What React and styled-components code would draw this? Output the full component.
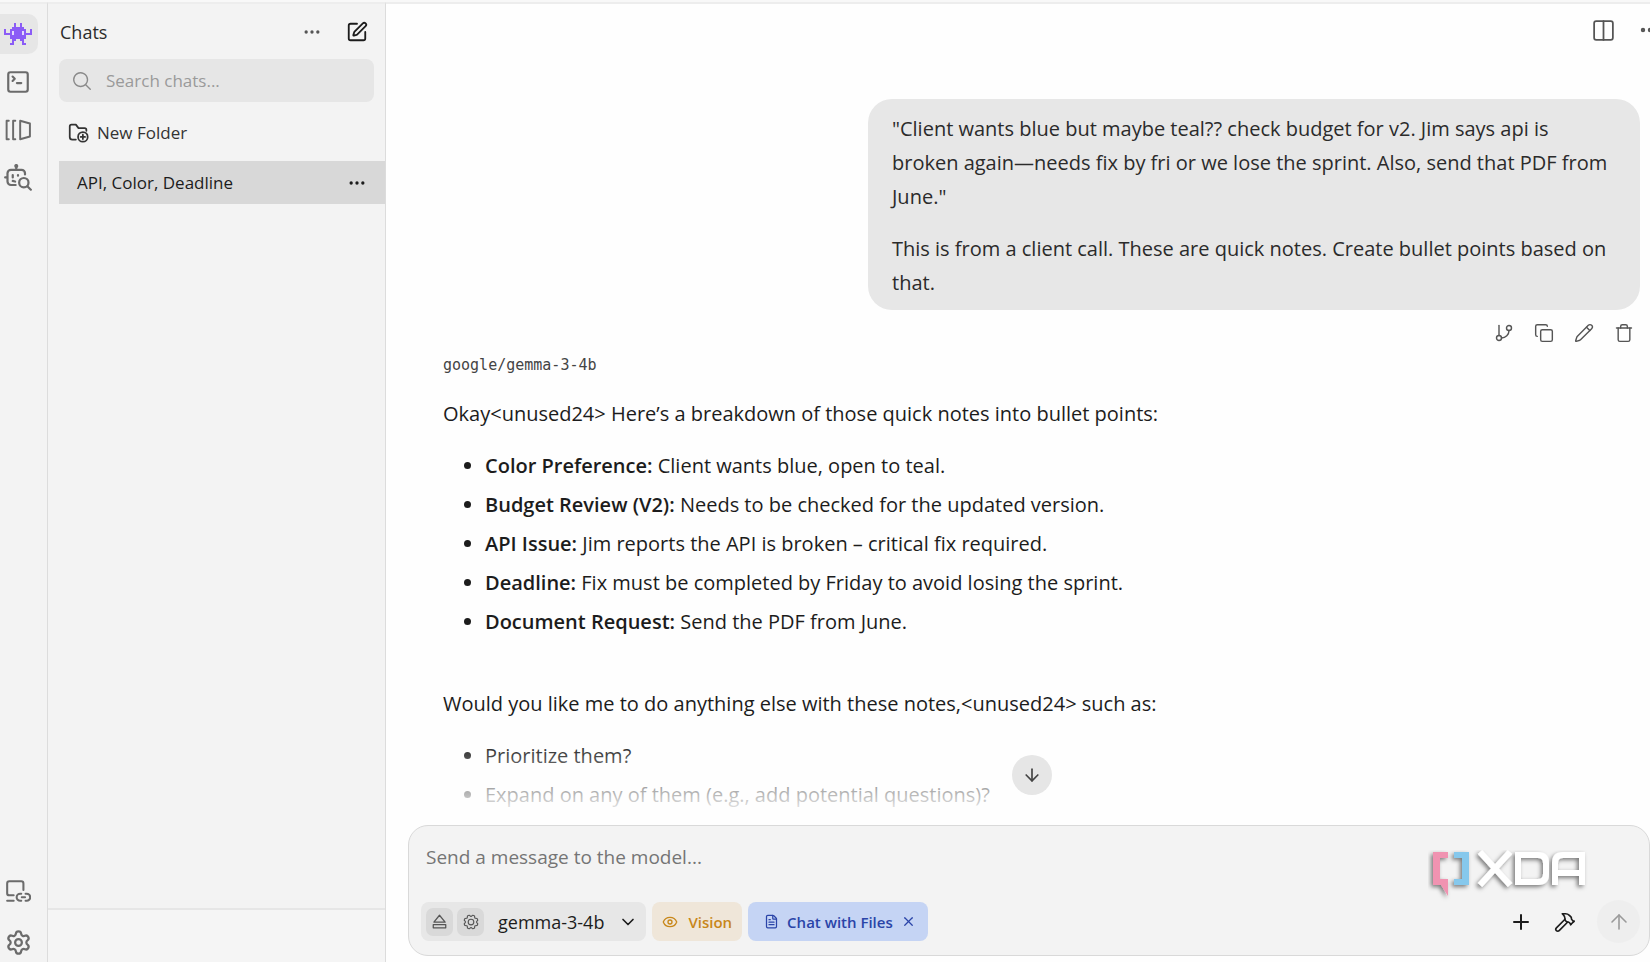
import React from 'react';
import styled, { createGlobalStyle, css } from 'styled-components';
import {
  ArrowDown,
  ArrowUp,
  ChevronDown,
  Columns2,
  Copy,
  Ellipsis,
  Eye,
  FileText,
  GitBranch,
  Hammer,
  Pencil,
  Plus,
  Settings,
  SquarePen,
  SquareTerminal,
  Trash,
  X,
} from 'lucide-react';
import { PiGear, PiMagnifyingGlass } from 'react-icons/pi';

const GlobalStyle = createGlobalStyle`
  * {
    box-sizing: border-box;
  }

  body {
    margin: 0;
    background: #fefefe;
    color: #1c1c1c;
    font-family: 'Open Sans', 'Noto Sans', sans-serif;
  }

  button, input, textarea {
    font: inherit;
    color: inherit;
  }
`;

const Window = styled.div`
  height: 100vh;
  display: flex;
  border-top: 2px solid #f8f8f8;
  overflow: hidden;
`;

const PlainButton = styled.button`
  display: flex;
  align-items: center;
  justify-content: center;
  padding: 0;
  border: none;
  background: none;
  cursor: pointer;
`;

/* icon rail */

const Rail = styled.nav`
  width: 48px;
  flex-shrink: 0;
  display: flex;
  flex-direction: column;
  justify-content: space-between;
  padding: 10px 0 0;
  background: #f3f3f3;
  border-top: 2px solid #ededed;
  border-right: 1px solid #dcdcdc;
`;

const RailGroup = styled.div`
  display: flex;
  flex-direction: column;
  gap: ${({ $gap }) => $gap}px;
`;

const RailButton = styled(PlainButton)`
  width: 38px;
  height: 40px;
  padding-right: 2px;
  color: #6b6b6b;
  border-radius: 0 10px 10px 0;
  ${({ $active }) => $active && css`
    background: #e6e6e6;
    color: #8b5cf6;
  `}
`;

/* chat list */

const Sidebar = styled.aside`
  width: 338px;
  flex-shrink: 0;
  display: flex;
  flex-direction: column;
  background: #f3f3f3;
  border-top: 2px solid #ededed;
  border-right: 1px solid #dcdcdc;
  padding-left: 11px;
`;

const SidebarHeader = styled.div`
  height: 55px;
  display: flex;
  align-items: center;
  gap: 24px;
  padding: 0 17px 0 1px;
`;

const SidebarTitle = styled.h1`
  flex: 1;
  margin: 0;
  font-size: 18px;
  line-height: 24px;
  font-weight: 500;
  color: #2b2b2b;
`;

const SearchBox = styled.label`
  height: 43px;
  flex-shrink: 0;
  margin-right: 11px;
  display: flex;
  align-items: center;
  gap: 11px;
  padding: 0 12px;
  border-radius: 8px;
  background: #e6e6e6;
  color: #8a8a8a;
`;

const SearchInput = styled.input`
  flex: 1;
  min-width: 0;
  border: none;
  outline: none;
  background: none;
  font-size: 17px;
  &::placeholder {
    color: #9a9a9a;
  }
`;

const NewFolder = styled(PlainButton)`
  height: 59px;
  justify-content: flex-start;
  gap: 8px;
  padding: 2px 0 0 9px;
  font-size: 17px;
  color: #333;
`;

const ChatRow = styled.div`
  height: 43px;
  display: flex;
  align-items: center;
  justify-content: space-between;
  padding: 0 18px;
  background: #d8d8d8;
  font-size: 17px;
`;

const ChatLink = styled.a`
  color: #1c1c1c;
  text-decoration: none;
`;

const SidebarFooter = styled.div`
  height: 54px;
  margin: auto 0 0 -11px;
  border-top: 2px solid #e6e6e6;
  background: #f5f5f5;
`;

/* conversation */

const Main = styled.main`
  flex: 1;
  min-width: 0;
  display: flex;
  flex-direction: column;
  border-top: 2px solid #ededed;
`;

const Toolbar = styled.header`
  height: 52px;
  flex-shrink: 0;
  display: flex;
  align-items: center;
  justify-content: flex-end;
  gap: 22px;
  margin-right: -12px;
`;

const Thread = styled.div`
  flex: 1;
  min-height: 0;
  overflow: hidden;
  padding: 43px 10px 0 57px;
  position: relative;
  font-size: 20px;
  line-height: 34px;
`;

const Fade = styled.div`
  position: absolute;
  left: 0;
  right: 0;
  bottom: 0;
  height: 84px;
  background: linear-gradient(to bottom, rgba(254, 254, 254, 0), #fefefe 92%);
`;

const ScrollDown = styled(PlainButton)`
  position: absolute;
  left: 50%;
  bottom: 30px;
  width: 40px;
  height: 40px;
  margin-left: -6px;
  border-radius: 50%;
  background: #e6e6e6;
  color: #444;
`;

const UserMessage = styled.div`
  width: 772px;
  max-width: 100%;
  margin-left: auto;
  padding: 13px 24px 10px;
  border-radius: 24px;
  background: #e7e7e7;
  color: #2b2b2b;
`;

const Paragraph = styled.p`
  margin: 0;
  & + & {
    margin-top: 18px;
  }
`;

const MessageActions = styled.div`
  height: 46px;
  display: flex;
  align-items: center;
  justify-content: flex-end;
  gap: 20px;
  padding-right: 6px;
  color: #555;
`;

const ModelName = styled.div`
  margin-bottom: 23px;
  font-family: 'DejaVu Sans Mono', 'Liberation Mono', monospace;
  font-size: 15px;
  line-height: 18px;
  color: #444;
`;

const BulletList = styled.ul`
  margin: 18px 0 48px;
  padding-left: 42px;
`;

const Bullet = styled.li`
  margin-bottom: 5px;
  strong {
    font-weight: 600;
  }
`;

/* composer */

const Composer = styled.form`
  height: 131px;
  flex-shrink: 0;
  margin: 0 0 6px 22px;
  display: flex;
  flex-direction: column;
  justify-content: space-between;
  padding: 14px 9px 12px 12px;
  border: 1px solid #d9d9d9;
  border-radius: 20px;
  background: #f3f3f3;
`;

const ComposerTop = styled.div`
  display: flex;
  justify-content: space-between;
`;

const MessageInput = styled.textarea`
  flex: 1;
  height: 34px;
  padding: 0 5px;
  border: none;
  outline: none;
  resize: none;
  background: none;
  font-size: 19px;
  line-height: 34px;
  &::placeholder {
    color: #757575;
  }
`;

const LogoHolder = styled.div`
  height: 60px;
  margin: 10px 52px -40px 0;
`;

const ComposerBar = styled.div`
  display: flex;
  align-items: center;
  gap: 6px;
`;

const Chip = styled.div`
  height: 39px;
  display: flex;
  align-items: center;
  gap: ${({ $gap = 10 }) => $gap}px;
  padding: ${({ $pad = '0 10px' }) => $pad};
  border-radius: 8px;
  background: ${({ $bg = '#e7e7e7' }) => $bg};
  color: ${({ $color = '#1c1c1c' }) => $color};
  font-size: 15px;
  font-weight: ${({ $weight = 600 }) => $weight};
`;

const ChipTool = styled(PlainButton)`
  width: 27px;
  height: 28px;
  border-radius: 7px;
  background: #d9d9d9;
  color: #555;
`;

const ModelPicker = styled(PlainButton)`
  gap: 14px;
  padding-left: 10px;
  font-size: 18px;
`;

const ComposerActions = styled.div`
  margin-left: auto;
  display: flex;
  align-items: center;
  gap: 21px;
`;

const SendButton = styled(PlainButton)`
  width: 43px;
  height: 43px;
  border-radius: 50%;
  background: #eeeeee;
  color: #9a9a9a;
`;

const invader = [
  '.....#..#.....',
  '.....#..#.....',
  '....######....',
  '#..########..#',
  '#..#.####.#..#',
  '####.####.####',
  '...########...',
  '...########...',
  '....##..##....',
  '....#....#....',
  '...##....##...',
];

function InvaderIcon() {
  return (
    <svg width="28" height="22" viewBox="0 0 14 11" fill="currentColor" shapeRendering="crispEdges">
      <rect x="4" y="4" width="6" height="2" fill="#e4d8fd" />
      {invader.map((row, y) =>
        row.split('').map((cell, x) => cell === '#' && (
          <rect key={`${x}-${y}`} x={x} y={y} width="1" height="1" />
        ))
      )}
    </svg>
  );
}

function LineIcon({ size = 24, width = 2, children }) {
  return (
    <svg
      width={size}
      height={size}
      viewBox="0 0 24 24"
      fill="none"
      stroke="currentColor"
      strokeWidth={width}
      strokeLinecap="round"
      strokeLinejoin="round"
    >
      {children}
    </svg>
  );
}

function ShelfIcon() {
  return (
    <LineIcon size={26} width={1.8}>
      <path d="M3.500 3.500H1.500v17h2M9.500 3.500h-2v17h2" />
      <path d="M14 3.500v17l9-2.500V6z" />
    </LineIcon>
  );
}

function BotSearchIcon() {
  return (
    <LineIcon size={28} width={1.9}>
      <path d="M10.500 5V2.500M10.500 5H6a3 3 0 0 0-3 3v7a3 3 0 0 0 3 3h4M10.500 5H15a3 3 0 0 1 3 3v1M1 11.500h2M7.500 9.500v2M12 9.500v.5M7.500 14.500l2 .5" />
      <circle cx="10.500" cy="1.700" r=".8" fill="currentColor" />
      <circle cx="17" cy="16" r="4" />
      <path d="m20 19 3 3" />
    </LineIcon>
  );
}

function MonitorLinkIcon() {
  return (
    <LineIcon size={26} width={1.9}>
      <path d="M8 16H4a2 2 0 0 1-2-2V5a2 2 0 0 1 2-2h11a2 2 0 0 1 2 2v6M2 21h6" />
      <path d="M15 14.500h-1a3 3 0 0 0 0 6.500h1M19 14.500h1a3 3 0 0 1 0 6.500h-1M15.500 17.800h3" />
    </LineIcon>
  );
}

function FolderPlusIcon() {
  return (
    <LineIcon size={21}>
      <path d="M9 20H5a3 3 0 0 1-3-3V5a2 2 0 0 1 2-2h5l3 4h7a2 2 0 0 1 2 2v1" />
      <circle cx="17" cy="17" r="5.500" />
      <path d="M17 14.500v5M14.500 17h5" />
    </LineIcon>
  );
}

function EjectIcon() {
  return (
    <LineIcon size={15}>
      <path d="M12 2 3 13h18zM2 17h20v5H2z" />
    </LineIcon>
  );
}

function XdaLogo() {
  return (
    <svg width="160" height="52" viewBox="0 0 160 52" role="img" aria-label="XDA">
      <defs>
        <filter id="logoShadow" x="-10%" y="-10%" width="120%" height="130%">
          <feDropShadow dx="-2" dy="2" stdDeviation="2" floodColor="#000" floodOpacity=".5" />
        </filter>
      </defs>
      <g filter="url(#logoShadow)">
        <path d="M5 2h15v6h-8v21h8v17l-7-11H5z" fill="#f093b1" />
        <path d="M26 2h15v33H26v-6h8V8h-8z" fill="#86c8ec" />
        <g fill="none" stroke="#fff" strokeWidth="6">
          <path d="M52 2 82 35M82 2 52 35" />
          <path d="M90 5h20q8 0 8 8v11q0 8-8 8H90z" />
          <path d="M127 35V13q0-8 8-8h19v30M127 23h27" />
        </g>
      </g>
    </svg>
  );
}

const findings = [
  ['Color Preference:', 'Client wants blue, open to teal.'],
  ['Budget Review (V2):', 'Needs to be checked for the updated version.'],
  ['API Issue:', 'Jim reports the API is broken – critical fix required.'],
  ['Deadline:', 'Fix must be completed by Friday to avoid losing the sprint.'],
  ['Document Request:', 'Send the PDF from June.'],
];

function App() {
  return (
    <Window>
      <GlobalStyle />
      <Rail>
        <RailGroup $gap={8}>
          <RailButton $active aria-label="Chat"><InvaderIcon /></RailButton>
          <RailButton aria-label="Developer"><SquareTerminal size={26} strokeWidth={2} /></RailButton>
          <RailButton aria-label="My models"><ShelfIcon /></RailButton>
          <RailButton aria-label="Discover"><BotSearchIcon /></RailButton>
        </RailGroup>
        <RailGroup $gap={11}>
          <RailButton aria-label="Link"><MonitorLinkIcon /></RailButton>
          <RailButton aria-label="Settings"><Settings size={27} strokeWidth={2} /></RailButton>
        </RailGroup>
      </Rail>

      <Sidebar>
        <SidebarHeader>
          <SidebarTitle>Chats</SidebarTitle>
          <PlainButton aria-label="Chat options"><Ellipsis size={20} color="#555" /></PlainButton>
          <PlainButton aria-label="New chat"><SquarePen size={22} /></PlainButton>
        </SidebarHeader>
        <SearchBox>
          <PiMagnifyingGlass size={22} />
          <SearchInput type="search" placeholder="Search chats..." aria-label="Search chats" />
        </SearchBox>
        <NewFolder><FolderPlusIcon />New Folder</NewFolder>
        <ChatRow>
          <ChatLink href="#chat">API, Color, Deadline</ChatLink>
          <PlainButton aria-label="Chat menu"><Ellipsis size={20} /></PlainButton>
        </ChatRow>
        <SidebarFooter />
      </Sidebar>

      <Main>
        <Toolbar>
          <PlainButton aria-label="Split view"><Columns2 size={25} strokeWidth={1.7} color="#555" /></PlainButton>
          <PlainButton aria-label="More"><Ellipsis size={24} strokeWidth={2.4} color="#555" /></PlainButton>
        </Toolbar>
        <Thread>
          <UserMessage>
            <Paragraph>
              "Client wants blue but maybe teal?? check budget for v2. Jim says api is
              broken again—needs fix by fri or we lose the sprint. Also, send that PDF from June."
            </Paragraph>
            <Paragraph>
              This is from a client call. These are quick notes. Create bullet points based on that.
            </Paragraph>
          </UserMessage>
          <MessageActions>
            <PlainButton aria-label="Branch"><GitBranch size={20} strokeWidth={1.7} /></PlainButton>
            <PlainButton aria-label="Copy"><Copy size={20} strokeWidth={1.7} /></PlainButton>
            <PlainButton aria-label="Edit"><Pencil size={20} strokeWidth={1.7} /></PlainButton>
            <PlainButton aria-label="Delete"><Trash size={20} strokeWidth={1.7} /></PlainButton>
          </MessageActions>
          <ModelName>google/gemma-3-4b</ModelName>
          <Paragraph>Okay&lt;unused24&gt; Here’s a breakdown of those quick notes into bullet points:</Paragraph>
          <BulletList>
            {findings.map(([label, text]) => (
              <Bullet key={label}><strong>{label}</strong> {text}</Bullet>
            ))}
          </BulletList>
          <Paragraph>Would you like me to do anything else with these notes,&lt;unused24&gt; such as:</Paragraph>
          <BulletList>
            <Bullet>Prioritize them?</Bullet>
            <Bullet>Expand on any of them (e.g., add potential questions)?</Bullet>
          </BulletList>
          <Fade />
          <ScrollDown aria-label="Scroll to bottom"><ArrowDown size={20} /></ScrollDown>
        </Thread>
        <Composer>
          <ComposerTop>
            <MessageInput placeholder="Send a message to the model..." aria-label="Message" />
            <LogoHolder><XdaLogo /></LogoHolder>
          </ComposerTop>
          <ComposerBar>
            <Chip $gap={4} $pad="0 8px 0 5px" $weight={400}>
              <ChipTool type="button" aria-label="Eject model"><EjectIcon /></ChipTool>
              <ChipTool type="button" aria-label="Model settings"><PiGear size={18} /></ChipTool>
              <ModelPicker type="button">gemma-3-4b<ChevronDown size={20} /></ModelPicker>
            </Chip>
            <Chip $bg="#efe6d9" $color="#c88719"><Eye size={16} />Vision</Chip>
            <Chip $gap={8} $bg="#c5d4f4" $color="#2a44a8" $pad="0 12px 0 16px">
              <FileText size={15} />Chat with Files
              <PlainButton type="button" aria-label="Remove"><X size={15} /></PlainButton>
            </Chip>
            <ComposerActions>
              <PlainButton type="button" aria-label="Attach"><Plus size={24} /></PlainButton>
              <PlainButton type="button" aria-label="Tools"><Hammer size={22} strokeWidth={1.8} /></PlainButton>
              <SendButton aria-label="Send"><ArrowUp size={24} strokeWidth={1.6} /></SendButton>
            </ComposerActions>
          </ComposerBar>
        </Composer>
      </Main>
    </Window>
  );
}

export default App;
